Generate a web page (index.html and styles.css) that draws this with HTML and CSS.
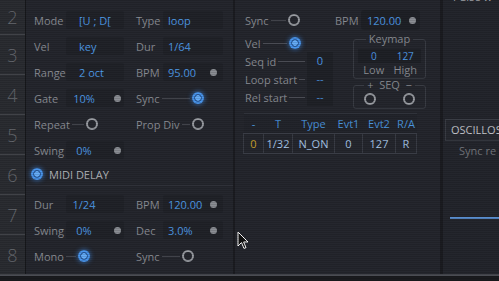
FILE: index.html
```html
<!DOCTYPE html>
<html lang="en">
<head>
    <meta charset="UTF-8">
    <title>Arp / MIDI delay</title>
    <link rel="stylesheet" href="styles.css">
</head>
<body>
    <div class="screen">
        <!-- tabs on the left -->
        <div class="tabs">
            <div class="tab first">2</div>
            <div class="tab">3</div>
            <div class="tab">4</div>
            <div class="tab">5</div>
            <div class="tab">6</div>
            <div class="tab">7</div>
            <div class="tab">8</div>
        </div>

        <!-- arp + midi delay -->
        <div class="arp">
            <div class="cols">
                <div class="col-a">
                    <div class="row"><span class="lbl">Mode</span><span class="box pad">[U ; D[</span></div>
                    <div class="row"><span class="lbl">Vel</span><span class="box pad">key</span></div>
                    <div class="row"><span class="lbl">Range</span><span class="box pad">2 oct</span></div>
                    <div class="row"><span class="lbl">Gate</span><span class="box"><span class="num">10%</span><i class="dot"></i></span></div>
                    <div class="row trow t-repeat"><span class="tl">Repeat</span><span class="wire"></span><span class="tog"></span></div>
                    <div class="row"><span class="lbl">Swing</span><span class="box"><span class="num">0%</span><i class="dot"></i></span></div>
                </div>
                <div class="col-b">
                    <div class="row"><span class="lbl2">Type</span><span class="box2">loop</span></div>
                    <div class="row"><span class="lbl2">Dur</span><span class="box2">1/64</span></div>
                    <div class="row"><span class="lbl2">BPM</span><span class="box2"><span class="v">95.00</span><i class="dot"></i></span></div>
                    <div class="row trow t-sync"><span class="tl">Sync</span><span class="wire"></span><span class="tog on"></span></div>
                    <div class="row trow t-sync"><span class="tl">Prop Div</span><span class="wire"></span><span class="tog"></span></div>
                </div>
            </div>

            <div class="section-head"><span class="tog on"></span>MIDI DELAY</div>

            <div class="cols">
                <div class="col-a">
                    <div class="row"><span class="lbl">Dur</span><span class="box"><span class="num">1/24</span></span></div>
                    <div class="row"><span class="lbl">Swing</span><span class="box"><span class="num">0%</span><i class="dot"></i></span></div>
                    <div class="row trow t-mono"><span class="tl">Mono</span><span class="wire"></span><span class="tog on"></span></div>
                </div>
                <div class="col-b">
                    <div class="row"><span class="lbl2">BPM</span><span class="box2"><span class="v">120.00</span><i class="dot"></i></span></div>
                    <div class="row"><span class="lbl2">Dec</span><span class="box2"><span class="v">3.0%</span><i class="dot"></i></span></div>
                    <div class="row trow t-dsync"><span class="tl">Sync</span><span class="wire"></span><span class="tog"></span></div>
                </div>
            </div>
        </div>

        <!-- sequencer -->
        <div class="seq">
            <div class="seq-top">
                <div class="row trow t-msync"><span class="tl">Sync</span><span class="wire"></span><span class="tog"></span></div>
                <span class="lbl3">BPM</span>
                <span class="box3"><span class="v">120.00</span><i class="dot"></i></span>
            </div>
            <div class="seq-body">
                <div class="seq-left">
                    <div class="srow t-vel"><span class="tl">Vel</span><span class="wire"></span><span class="tog on"></span></div>
                    <div class="srow"><span class="tl">Seq id</span><span class="wire"></span><span class="cell">0</span></div>
                    <div class="srow"><span class="tl">Loop start</span><span class="wire"></span><span class="cell">--</span></div>
                    <div class="srow"><span class="tl">Rel start</span><span class="wire"></span><span class="cell">--</span></div>
                </div>
                <div class="seq-right">
                    <fieldset class="group keymap">
                        <legend>Keymap</legend>
                        <div class="km-vals"><span>0</span><span>127</span></div>
                        <div class="km-lbls"><span>Low</span><span>High</span></div>
                    </fieldset>
                    <fieldset class="group seqbtn">
                        <legend>+&nbsp; SEQ &nbsp;&minus;</legend>
                        <div class="rings"><span class="tog"></span><span class="tog"></span></div>
                    </fieldset>
                </div>
            </div>
            <table class="steps">
                <thead>
                    <tr><th>-</th><th>T</th><th>Type</th><th>Evt1</th><th>Evt2</th><th>R/A</th></tr>
                </thead>
                <tbody>
                    <tr><td class="idx">0</td><td>1/32</td><td>N_ON</td><td>0</td><td>127</td><td>R</td></tr>
                </tbody>
            </table>
        </div>

        <!-- oscilloscope, cut off -->
        <div class="osc">
            <div class="osc-top">Pulse w</div>
            <div class="osc-head">OSCILLOS</div>
            <div class="osc-sub">Sync re</div>
            <div class="osc-line"></div>
        </div>
    </div>
    <div class="footer"></div>

    <svg class="cursor" width="12" height="19" viewBox="0 0 12 19">
        <path d="M1 1 L1 15 L4.5 11.5 L7 17.5 L9 16.6 L6.6 11 L11 11 Z" fill="#111" stroke="#fff" stroke-width="1"/>
    </svg>
</body>
</html>
```

FILE: styles.css
```css
body {
    margin: 0;
    width: 499px;
    height: 281px;
    overflow: hidden;
    position: relative;
    background-color: #1b1c20;
    font-family: "Open Sans", "Liberation Sans", sans-serif;
    font-size: 11px;
    color: #8a8d94;
}
/* scanlines over everything */
body::after {
    content: "";
    position: absolute;
    left: 0;
    top: 0;
    right: 0;
    bottom: 0;
    pointer-events: none;
    background: repeating-linear-gradient(to bottom, rgba(0, 0, 0, 0.13) 0 1px, transparent 1px 2px);
}
.screen {
    display: flex;
    height: 274px;
    border-bottom: 2px solid #4a4c53;
}
.footer {
    height: 5px;
    background-color: #1a1b1f;
}

/* tabs */
.tabs {
    width: 25px;
    border-right: 1px solid #17181b;
    background-color: #2b2d32;
    display: flex;
    flex-direction: column;
    flex: none;
}
.tab {
    flex: none;
    height: 39px;
    border-bottom: 1px solid #4a4c52;
    display: flex;
    align-items: center;
    justify-content: center;
    font-size: 18px;
    font-weight: 300;
    color: #65686e;
}
.tab.first {
    height: 34px;
}

/* arp panel */
.arp {
    width: 209px;
    flex: none;
    box-sizing: border-box;
    padding-top: 7px;
    background-color: #25272e;
    border-right: 2px solid #1b1c21;
}
.cols {
    display: flex;
    padding-left: 8px;
}
.col-a {
    width: 102px;
}
.row {
    height: 26px;
    display: flex;
    align-items: center;
}
.lbl {
    width: 32px;
}
.lbl2 {
    width: 27px;
}
.box, .box2 {
    height: 18px;
    display: flex;
    align-items: center;
    background-color: rgba(0, 0, 0, 0.1);
    border-radius: 2px;
    color: #4f9be8;
    box-sizing: border-box;
}
.box {
    width: 58px;
}
.box.pad {
    padding-left: 13px;
}
.box2 {
    width: 60px;
    padding-left: 5px;
}
.num {
    width: 36px;
    text-align: center;
}
.v {
    flex: 1;
}
.box .dot {
    margin-left: 12px;
}
.box2 .dot {
    margin-right: 6px;
}
.dot {
    width: 7px;
    height: 7px;
    border-radius: 50%;
    background-color: #8c8f95;
    flex: none;
}

/* toggle rows */
.trow .tl, .srow .tl {
    flex: none;
}
.wire {
    flex: 1;
    height: 1px;
    margin: 0 2px;
    background-color: #4a4c54;
}
.tog {
    width: 12px;
    height: 12px;
    flex: none;
    box-sizing: border-box;
    border-radius: 50%;
    border: 2px solid #9a9da3;
    background-color: #25272e;
}
.tog.on {
    border: none;
    background: radial-gradient(circle, #66adf8 0 2.5px, #2d62a6 3px 3.6px, #4a96ee 4.2px);
    box-shadow: 0 0 4px 1px rgba(64, 140, 235, 0.55);
}
.t-repeat { width: 64px; }
.t-sync { width: 68px; }
.t-mono { width: 56px; }
.t-dsync { width: 58px; }

.section-head {
    height: 22px;
    margin-bottom: 5px;
    padding-left: 5px;
    display: flex;
    align-items: center;
    gap: 6px;
    color: #b4b6bb;
    border-bottom: 1px solid #2f3139;
}

/* sequencer panel */
.seq {
    width: 208px;
    flex: none;
    padding: 9px 0 0 10px;
    box-sizing: border-box;
    background-color: #25272e;
    border-right: 3px solid #1b1c21;
}
.seq-top {
    height: 22px;
    display: flex;
    align-items: center;
}
.seq-top .row {
    height: 22px;
}
.t-msync {
    width: 55px;
}
.lbl3 {
    margin-left: 35px;
    width: 26px;
}
.box3 {
    width: 59px;
    height: 20px;
    display: flex;
    align-items: center;
    padding-left: 6px;
    box-sizing: border-box;
    background-color: rgba(0, 0, 0, 0.14);
    border-radius: 3px;
    color: #4f9be8;
}
.box3 .dot {
    margin-right: 4px;
}
.seq-body {
    display: flex;
    margin-top: 3px;
}
.seq-left {
    width: 88px;
}
.srow {
    height: 18px;
    display: flex;
    align-items: center;
}
.t-vel {
    width: 56px;
}
.cell {
    width: 26px;
    height: 18px;
    line-height: 18px;
    text-align: center;
    flex: none;
    color: #4f9be8;
    background-color: rgba(0, 0, 0, 0.12);
}
.seq-right {
    margin-left: 20px;
    width: 73px;
}
.group {
    margin: 0;
    padding: 0 4px;
    border: 1px solid #3a3d45;
    border-radius: 3px;
    min-width: 0;
}
.group legend {
    padding: 0 3px;
    margin: 0 auto;
    line-height: 12px;
    color: #8a8d94;
}
.keymap {
    margin-top: -1px;
    padding-bottom: 1px;
}
.km-vals, .km-lbls {
    display: grid;
    grid-template-columns: 1fr 1fr;
    text-align: center;
}
.km-vals {
    margin-top: 4px;
    height: 14px;
    line-height: 14px;
    background-color: rgba(0, 0, 0, 0.15);
    color: #4f9be8;
    font-size: 10px;
}
.km-lbls {
    line-height: 14px;
}
.seqbtn {
    padding-bottom: 3px;
}
.rings {
    display: flex;
    justify-content: space-between;
    padding: 2px 6px 0 6px;
}

/* step table */
.steps {
    margin: 4px 0 0 -2px;
    border-collapse: collapse;
    font-size: 11px;
}
.steps th {
    height: 19px;
    padding: 0;
    font-weight: normal;
    color: #4b95df;
    background-color: #23252c;
    border-top: 1px solid #30333b;
}
.steps td {
    height: 19px;
    padding: 0;
    text-align: center;
    color: #a9c8ea;
    border: 1px solid #3a3d46;
}
.steps th:nth-child(1) { width: 20px; }
.steps th:nth-child(2) { width: 29px; }
.steps th:nth-child(3) { width: 42px; }
.steps th:nth-child(4) { width: 28px; }
.steps th:nth-child(5) { width: 33px; }
.steps th:nth-child(6) { width: 21px; }
.steps td.idx {
    color: #cfa42c;
}

/* oscilloscope */
.osc {
    flex: 1;
    background-color: #24262d;
    overflow: hidden;
}
.osc-top {
    margin-top: -11px;
    padding-left: 10px;
    height: 14px;
    color: #b0b2b8;
    white-space: nowrap;
}
.osc-head {
    margin: 116px 0 0 2px;
    height: 20px;
    line-height: 20px;
    padding-left: 5px;
    border: 1px solid #3a3d45;
    border-right: none;
    background-color: #272930;
    color: #c4c6cc;
    white-space: nowrap;
}
.osc-sub {
    margin-top: 2px;
    padding-left: 16px;
    color: #74777d;
    white-space: nowrap;
}
.osc-line {
    margin: 59px 0 0 7px;
    height: 2px;
    background-color: #5a8ecf;
}

.cursor {
    position: absolute;
    left: 237px;
    top: 231px;
}
```
